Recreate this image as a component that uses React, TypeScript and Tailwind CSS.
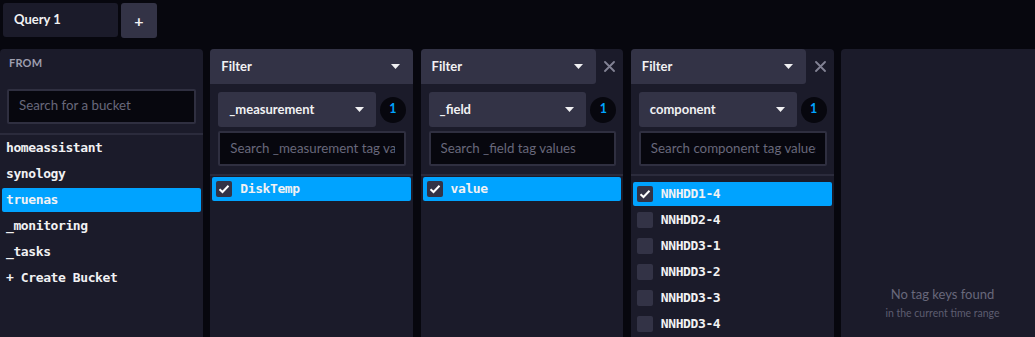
import React from "react"

const mono = "font-['DejaVu_Sans_Mono','Liberation_Mono',monospace] text-[13px] tracking-[-0.4px]"

function Caret() {
  return (
    <svg width="9" height="5" viewBox="0 0 9 5" className="shrink-0">
      <path d="M0 0 L9 0 L4.5 5 Z" fill="#f1f1f3" />
    </svg>
  )
}

function Close() {
  return (
    <svg width="11" height="11" viewBox="0 0 11 11">
      <path d="M1 1 L10 10 M10 1 L1 10" stroke="#828294" strokeWidth="1.8" strokeLinecap="round" />
    </svg>
  )
}

function Check({ on }: { on: boolean }) {
  return (
    <span className="flex h-[16px] w-[16px] shrink-0 items-center justify-center rounded-[2px] bg-[#333346]">
      {on && (
        <svg width="12" height="10" viewBox="0 0 12 10">
          <path d="M1.5 5.2 L4.5 8 L10.5 1.8" stroke="#ffffff" strokeWidth="2" fill="none" />
        </svg>
      )}
    </span>
  )
}

function SearchBox({ text }: { text: string }) {
  return (
    <div className="flex h-[35px] items-center rounded-[2px] border-2 border-[#2f2f40] bg-[#07070e] pl-[10px] pr-[9px]">
      <span className="block overflow-hidden whitespace-nowrap text-[13.3px] text-[#68687b]">{text}</span>
    </div>
  )
}

function FilterPanel({
  tag,
  placeholder,
  items,
  closable,
  listPad,
}: {
  tag: string
  placeholder: string
  items: { name: string; on: boolean }[]
  closable?: boolean
  listPad?: string
}) {
  return (
    <div className="flex w-[202.7px] shrink-0 flex-col rounded-t-[4px] bg-[#1b1b2a]">
      <div className="flex h-[35px] items-center">
        <div
          className={
            "flex h-full items-center justify-between rounded-t-[4px] bg-[#333346] pl-[11px] pr-[13px] " +
            (closable ? "w-[175px] rounded-br-[3px]" : "w-full")
          }
        >
          <span className="text-[13px] font-bold text-[#f1f1f3]">Filter</span>
          <Caret />
        </div>
        {closable && (
          <div className="flex flex-1 items-center justify-center pl-[1px]">
            <Close />
          </div>
        )}
      </div>
      <div className="flex flex-col gap-[4px] border-b-2 border-[#2b2b3c] pb-[8px] pl-[8px] pr-[7px] pt-[8px]">
        <div className="flex items-center gap-[4px]">
          <div className="flex h-[35px] flex-1 items-center justify-between rounded-[3px] bg-[#333346] pl-[11px] pr-[12px]">
            <span className="text-[13px] font-bold text-[#f1f1f3]">{tag}</span>
            <Caret />
          </div>
          <span className="flex h-[26px] w-[26px] items-center justify-center rounded-full bg-[#07070e] text-[12.5px] font-bold text-[#00a3ff]">
            1
          </span>
        </div>
        <SearchBox text={placeholder} />
      </div>
      <div className={"flex flex-col gap-[2px] px-[2px] " + (listPad ?? "pt-[1px]")}>
        {items.map((it) => (
          <div
            key={it.name}
            className={
              "flex h-[24px] items-center gap-[8px] rounded-[2px] pl-[4px] " +
              (it.on ? "bg-[#00a3ff]" : "")
            }
          >
            <Check on={it.on} />
            <span className={mono + " font-bold text-[#f1f1f3]"}>{it.name}</span>
          </div>
        ))}
      </div>
    </div>
  )
}

export default function App() {
  const buckets = ["homeassistant", "synology", "truenas", "_monitoring", "_tasks", "+ Create Bucket"]

  return (
    <div className="h-[337px] w-[1035px] overflow-hidden bg-[#07070e] font-['Lato',sans-serif]">
      {/* tabs */}
      <div className="flex h-[49px] gap-[3px] pl-[3px] pt-[3px]">
        <div className="flex h-[34px] w-[115px] items-center rounded-[3px] bg-[#1b1b2a] pl-[11px] text-[13px] font-bold text-[#f1f1f3]">
          Query 1
        </div>
        <div className="flex h-[35px] w-[36px] items-center justify-center rounded-[3px] bg-[#333346] text-[16px] font-bold text-[#f1f1f3]">
          +
        </div>
      </div>

      {/* builder cards */}
      <div className="flex h-[288px] gap-[7.6px]">
        {/* FROM */}
        <div className="flex w-[202.7px] shrink-0 flex-col rounded-t-[4px] bg-[#1b1b2a]">
          <div className="border-b-2 border-[#2b2b3c] px-[7px] pb-[9px] pt-[6px]">
            <div className="pl-[2px] text-[11px] font-bold uppercase tracking-[0.2px] text-[#9e9eaf]">From</div>
            <div className="mt-[17px]">
              <SearchBox text="Search for a bucket" />
            </div>
          </div>
          <div className="flex flex-col gap-[2px] px-[2px] pt-[1px]">
            {buckets.map((b) => (
              <div
                key={b}
                className={
                  mono +
                  " flex h-[24px] items-center rounded-[2px] pl-[4px] font-bold text-[#f1f1f3] " +
                  (b === "truenas" ? "bg-[#00a3ff]" : "")
                }
              >
                {b}
              </div>
            ))}
          </div>
        </div>

        <FilterPanel
          tag="_measurement"
          placeholder="Search _measurement tag values"
          items={[{ name: "DiskTemp", on: true }]}
        />
        <FilterPanel
          tag="_field"
          placeholder="Search _field tag values"
          items={[{ name: "value", on: true }]}
          closable
        />
        <FilterPanel
          tag="component"
          placeholder="Search component tag values"
          closable
          listPad="pt-[6px]"
          items={[
            { name: "NNHDD1-4", on: true },
            { name: "NNHDD2-4", on: false },
            { name: "NNHDD3-1", on: false },
            { name: "NNHDD3-2", on: false },
            { name: "NNHDD3-3", on: false },
            { name: "NNHDD3-4", on: false },
          ]}
        />

        {/* empty filter */}
        <div className="flex w-[202.7px] shrink-0 flex-col items-center rounded-t-[4px] bg-[#1b1b2a] pt-[236px]">
          <div className="text-[13px] text-[#68687b]">No tag keys found</div>
          <div className="mt-[1px] text-[10.5px] text-[#5d5d70]">in the current time range</div>
        </div>
      </div>
    </div>
  )
}
